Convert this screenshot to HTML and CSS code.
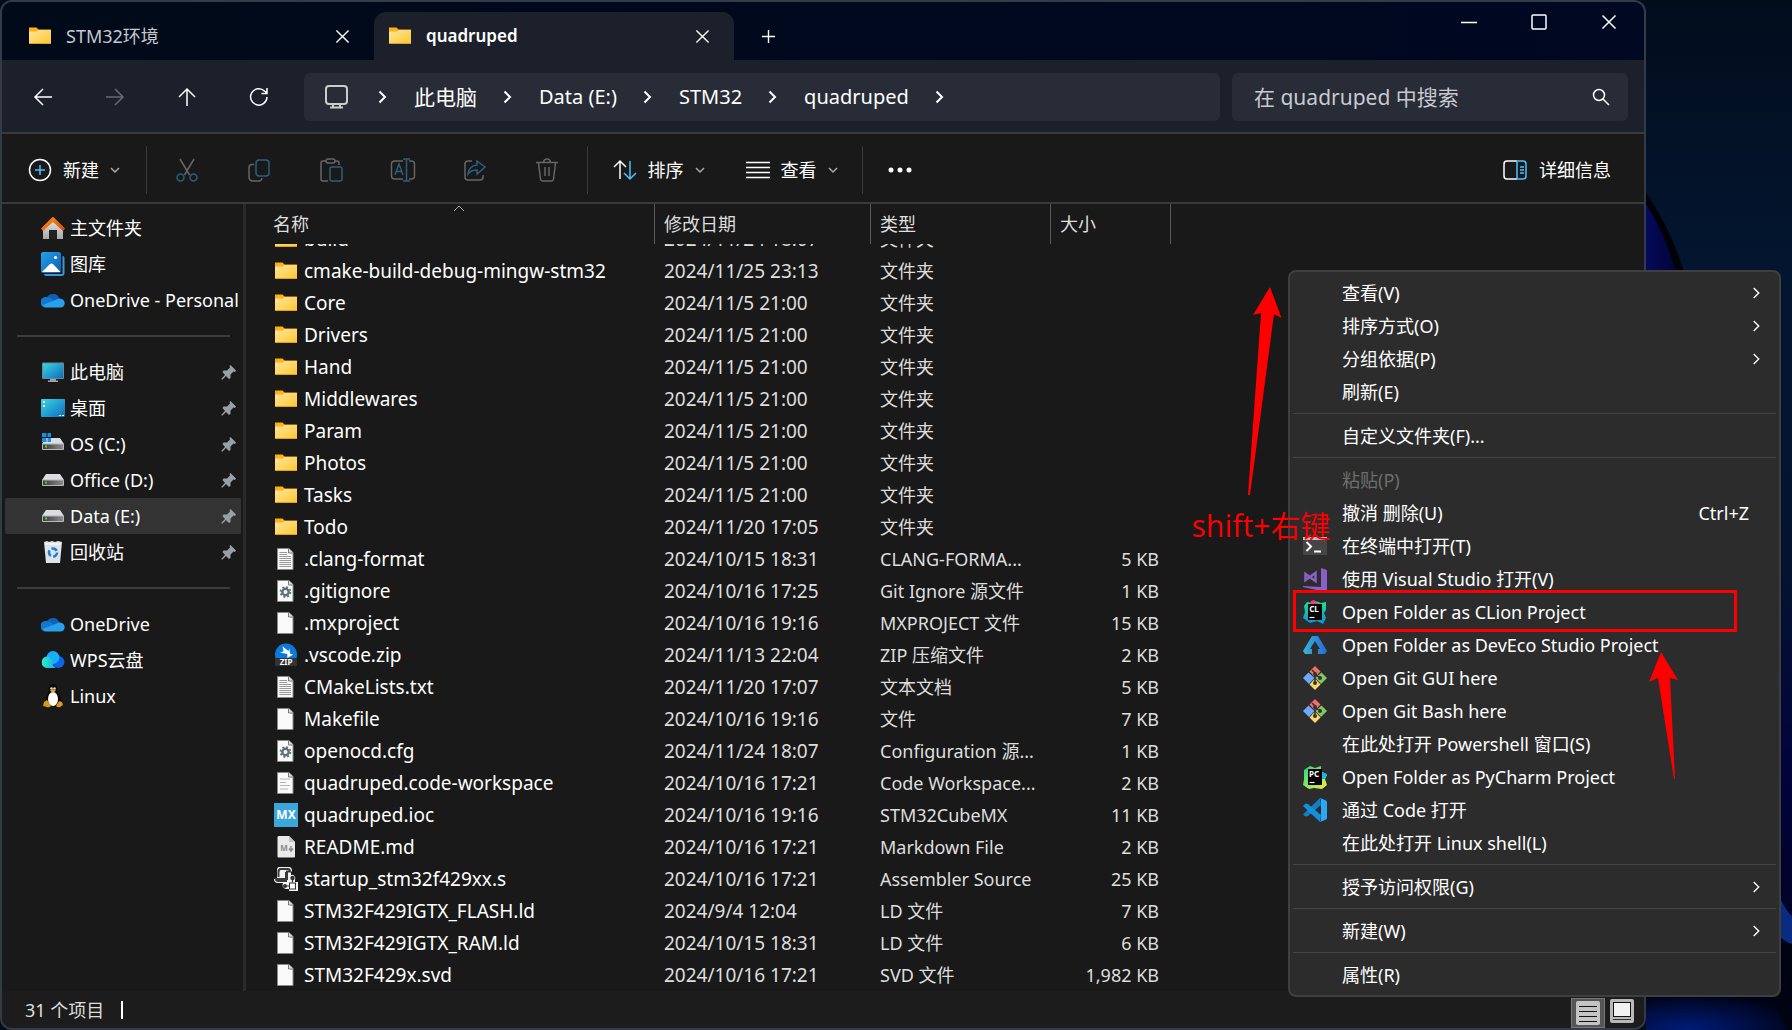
FILE: index.html
```html
<!DOCTYPE html>
<html lang="zh-CN">
<head>
  <meta charset="UTF-8" />
  <meta name="viewport" content="width=device-width, initial-scale=1.0"/>
  <title>quadruped</title>
  <link rel="stylesheet" href="styles.css">
</head>
<body>

<!-- icon sprite -->
<svg class="sprite" aria-hidden="true">
  <defs>
    <linearGradient id="gFolder" x1="0" y1="0" x2="1" y2="1"><stop offset="0" stop-color="#ffe69e"/><stop offset="1" stop-color="#ffc62e"/></linearGradient>
    <linearGradient id="gScreen" x1="0" y1="0" x2="1" y2="1"><stop offset="0" stop-color="#38d6e6"/><stop offset="1" stop-color="#0f6cbd"/></linearGradient>
    <linearGradient id="gHouse" x1="0" y1="0" x2="0" y2="1"><stop offset="0" stop-color="#e8e8e8"/><stop offset="1" stop-color="#a8a8a8"/></linearGradient>
    <linearGradient id="gRoof" x1="0" y1="0" x2="1" y2="1"><stop offset="0" stop-color="#ff9a1a"/><stop offset="1" stop-color="#d8420a"/></linearGradient>
    <linearGradient id="gPhoto" x1="0" y1="0" x2="1" y2="1"><stop offset="0" stop-color="#22a2ea"/><stop offset="1" stop-color="#0a5cb4"/></linearGradient>
    <linearGradient id="gWps" x1="0" y1="0" x2="1" y2="0"><stop offset="0" stop-color="#2df0c0"/><stop offset="1" stop-color="#18a8f5"/></linearGradient>
    <linearGradient id="gDrive" x1="0" y1="0" x2="1" y2="0"><stop offset="0" stop-color="#3c3c3c"/><stop offset="1" stop-color="#8a8a8a"/></linearGradient>
    <linearGradient id="gClion" x1="0" y1="0" x2="0" y2="1"><stop offset="0" stop-color="#21e38a"/><stop offset="1" stop-color="#0a8fe0"/></linearGradient>
    <linearGradient id="gPy" x1="0" y1="0" x2="1" y2="1"><stop offset="0" stop-color="#21d789"/><stop offset="1" stop-color="#f5ee3a"/></linearGradient>
    <linearGradient id="gEco" x1="0" y1="0" x2="1" y2="0"><stop offset="0" stop-color="#35b7d6"/><stop offset="1" stop-color="#2a67d8"/></linearGradient>
  </defs>

  <symbol id="folder" viewBox="0 0 24 24">
    <path d="M1 3.500h7.500l2 2H23v6H1z" fill="#fbb117"/>
    <path d="M1 7.500h8l1.500-1.500H23V20H1z" fill="url(#gFolder)"/>
    <path d="M1 19.500h22" stroke="#e0a020"/>
  </symbol>
  <symbol id="file" viewBox="0 0 24 24">
    <path d="M3.500 1.500h11.500l4 4v17H3.500z" fill="#fafafa" stroke="#8a8a8a"/>
    <path d="M14.500 1.500v4.500H19" fill="#dcdcdc" stroke="#7a7a7a"/>
  </symbol>
  <symbol id="text" viewBox="0 0 24 24">
    <use href="#file"/>
    <path d="M5.500 5.500H13M5.500 7.500H13M5.500 9.500h11.500M5.500 11.500h11.500M5.500 13.500h11.500M5.500 15.500h11.500M5.500 17.500h11.500M5.500 19.500h11.500" stroke="#9a9a9a"/>
  </symbol>
  <symbol id="code" viewBox="0 0 24 24">
    <use href="#file"/>
    <path d="M6 8h10M6 11.500h6M6 14.500h10M6 18h8" stroke="#b4b4b4"/>
  </symbol>
  <symbol id="config" viewBox="0 0 24 24">
    <use href="#file"/>
    <circle cx="11.500" cy="13" r="3.200" fill="none" stroke="#5e7078" stroke-width="2.400"/>
    <circle cx="11.500" cy="13" r="5" fill="none" stroke="#5e7078" stroke-width="1.600" stroke-dasharray="2 1.927"/>
  </symbol>
  <symbol id="zip" viewBox="0 0 24 24">
    <circle cx="12" cy="11.500" r="11" fill="#0a7bdc"/>
    <path d="M8.500 3.500l6 4.500.8-2.500 1 5.500 3 .5-6 3.500v-4L6 9.500l3.500-1z" fill="#fff"/>
    <rect x="1" y="15" width="22" height="8" rx="1" fill="#333"/>
  </symbol>
  <symbol id="markdown" viewBox="0 0 24 24">
    <path d="M5 1h10l6 6v14.500q0 1-1 1H4.500q-1 0-1-1V2q0-1 1.500-1z" fill="#eaeaea"/>
    <path d="M15 1v6h6z" fill="#c4c4c4"/>
    <path d="M17 11v4.500M15 13.500l2 2.500 2-2.500" fill="none" stroke="#8a8a8a" stroke-width="1.500"/>
  </symbol>
  <symbol id="asm" viewBox="0 0 24 24">
    <path d="M5 0h10q3 0 3 4l-1 1v3a3.500 3.500 0 0 1 4 5v2h3v9h-9v-2h-3a4 4 0 0 1-3-6H4q-4 0-4-4l3-1V4q0-4 2-4z" fill="#f4f4f4"/>
    <path d="M4.500 10V5q0-3 2.500-3h7q2 0 2 2.500h-3V12H2q0 2 2.500 2H12V5" fill="none" stroke="#3a3a3a" stroke-width="2"/>
    <circle cx="18.500" cy="11" r="2.200" fill="#333"/><circle cx="11" cy="19" r="2" fill="#333"/>
    <path d="M11 19h5M18.500 11v4.500" stroke="#333" stroke-width="1.200"/>
    <rect x="15.500" y="16" width="6" height="6" fill="#fff" stroke="#333"/>
  </symbol>

  <symbol id="home" viewBox="0 0 24 24">
    <path d="M2 11L12 2l10 9v12h-6v-9H8v9H2z" fill="url(#gHouse)"/>
    <path d="M8 14h8v9H8z" fill="#222"/>
    <path d="M0 12.500L11 1.500q1-1 2 0l11 11-2 2.500L12 6 2 15z" fill="url(#gRoof)"/>
  </symbol>
  <symbol id="gallery" viewBox="0 0 24 24">
    <path d="M3 22h18.500V4q2 0 2 2v15q0 3-3 3H5q-2 0-2-2z" fill="#3f95d6"/>
    <rect width="20" height="21" rx="2" fill="url(#gPhoto)"/>
    <circle cx="14.500" cy="5.500" r="1.600" fill="#fff"/>
    <path d="M1 20l8-8q1.500-1.200 3 0l7.500 8z" fill="#fff"/>
  </symbol>
  <symbol id="onedrive" viewBox="0 0 24 24">
    <path d="M6 9a7 7 0 0 1 12.500 2L12 16z" fill="#0d62b5"/>
    <path d="M5.500 9q3 0 6 2.500l6 4L4 19.500a5.200 5.200 0 0 1 1.500-10.500z" fill="#1279d2"/>
    <path d="M18 10.500a4.800 4.800 0 0 1 5.500 6q-1 3-4 3H5.500q-2.500 0-4-2.500L12 13z" fill="#28a0ea"/>
  </symbol>
  <symbol id="wps" viewBox="0 0 24 24">
    <circle cx="17.500" cy="14" r="6" fill="#0c62e8"/>
    <circle cx="12" cy="9.500" r="6.500" fill="#19aef8"/>
    <path d="M6 8.500a6 5.800 0 0 0 0 11.500h9q-4-2-3.500-7Q9 8.500 6 8.500z" fill="url(#gWps)"/>
  </symbol>
  <symbol id="linux" viewBox="0 0 24 24">
    <path d="M8 4q0-4 4-4t4 4q0 3 2.500 7t1.500 9H4q-1-4 1.500-8T8 4z" fill="#0a0a0a"/>
    <ellipse cx="12" cy="15" rx="5" ry="7" fill="#fff"/>
    <circle cx="10.500" cy="4.500" r="1.300" fill="#ddd"/><circle cx="13.500" cy="4.500" r="1.300" fill="#ddd"/>
    <path d="M9 6.500q3-2 6 0l-3 2.500z" fill="#f0b010"/>
    <path d="M3 18l3-2 4 6q-2 2-4 1l-4-1zM21 18l-3-1-3 5q2 2 4 1l3-2z" fill="#d89a12"/>
  </symbol>
  <symbol id="pc" viewBox="0 0 24 24">
    <rect x="1" y="2.500" width="22" height="16.500" rx="1" fill="#6e8790"/>
    <rect x="2" y="3.500" width="20" height="14.500" fill="url(#gScreen)"/>
    <path d="M9 19h6v1.500h2V22H7v-1.500h2z" fill="#9aa4aa"/>
  </symbol>
  <symbol id="desktop" viewBox="0 0 24 24">
    <rect y="3" width="24" height="18" rx="1" fill="url(#gScreen)"/>
    <path d="M2 5h2v2H2zM2 9h2v2H2zM18 19h2v1h-2zM21 19h2v1h-2z" fill="#fff"/>
  </symbol>
  <symbol id="drive" viewBox="0 0 24 24">
    <path d="M5 6h14l4 6H1z" fill="#dcdde0"/>
    <rect x="1" y="11.500" width="22" height="6.500" rx="1" fill="#b8b8b8"/>
    <rect x="2" y="12.500" width="20" height="4.500" fill="url(#gDrive)"/>
    <path d="M4 13.500h2v2H4z" fill="#2ee62e"/>
  </symbol>
  <symbol id="osdrive" viewBox="0 0 24 24">
    <use href="#drive"/>
    <path d="M1 1h4.500v4H1zM6.500 1H10v4H6.500zM1 6h4.500v4H1zM6.500 6H10v4H6.500z" fill="#1a8fe0"/>
  </symbol>
  <symbol id="bin" viewBox="0 0 24 24">
    <path d="M3 2l3-1 2 1 3-1 3 1 3-1 4 1-2 21H5z" fill="#dfe3e6"/>
    <path d="M4 4h16" stroke="#fff"/>
    <circle cx="12" cy="12.500" r="4" fill="none" stroke="#1a80d8" stroke-width="2.600" stroke-dasharray="6 2.400"/>
  </symbol>
  <symbol id="pin" viewBox="0 0 16 16">
    <path d="M9.500 1l5.500 5.500-1 1.500-1.500-.5-3 3 0 3.500-1.500 1-3-3L1.500 15.500l-1 0 0-1L4 11 1.500 8l1-1.500h3.500l3-3-.5-1.500z" fill="#96a0a6"/>
  </symbol>

  <symbol id="terminal" viewBox="0 0 24 24">
    <rect y="3" width="24" height="18" fill="#454545"/>
    <rect y="3" width="24" height="3" fill="#bdbdbd"/>
    <path d="M3.500 8l4.500 4.500L3.500 17M11 17.500h7" fill="none" stroke="#fff" stroke-width="2"/>
  </symbol>
  <symbol id="vs" viewBox="0 0 24 24">
    <path d="M18 1l6 2v20l-6 1-18-4v-1l18 1z" fill="#8a5fc8"/>
    <path d="M2.500 7l10 7V6l-10 7z" fill="none" stroke="#8a5fc8" stroke-width="2.500"/>
  </symbol>
  <symbol id="clion" viewBox="0 0 24 24">
    <path d="M4 2l5 1 3-2 6 2 5-1v8l-2 3 2 5-3 6-6-3-7 2-7-5 2-6-1-6z" fill="url(#gClion)"/>
    <path d="M8 1l3-1 4 4H7z" fill="#f03a8c"/>
    <rect x="5" y="4" width="14" height="16" fill="#000"/>
    <path d="M6.500 17.500h5" stroke="#fff" stroke-width="1.200"/>
  </symbol>
  <symbol id="pycharm" viewBox="0 0 24 24">
    <path d="M1 5l6-4 5 2 6-2v5l6 4-2 4 2 6-5 4-8-1-5 1-6-4 1-6z" fill="url(#gPy)"/>
    <path d="M19 7l5 2-2 5h-3z" fill="#15b8f0"/>
    <rect x="5" y="4" width="14" height="16" fill="#000"/>
    <path d="M6.500 17.500h5" stroke="#fff" stroke-width="1.200"/>
  </symbol>
  <symbol id="deveco" viewBox="0 0 24 24">
    <path d="M9 3h6l9 15-2 3h-7v-5h2l-5-8-5 8h2v5H2l-2-3z" fill="url(#gEco)"/>
  </symbol>
  <symbol id="git" viewBox="0 0 24 24">
    <path d="M12 0l5.500 5.500-5.500 6-5.500-6z" fill="#f07068"/>
    <path d="M5.500 6.500l6 5.500-5.500 6-6-6z" fill="#6ea8f8"/>
    <path d="M18.500 6.500L24 12l-6 6-5.500-6z" fill="#80c860"/>
    <path d="M12 12.500l5.500 6L12 24l-5.500-5.500z" fill="#f8d868"/>
    <path d="M9 4l3 3v11M12 8l5 4" stroke="#333" stroke-width="1.600" fill="none"/>
    <circle cx="12" cy="8" r="2" fill="#333"/><circle cx="17" cy="12" r="2" fill="#333"/><circle cx="12" cy="17" r="2" fill="#333"/>
  </symbol>
  <symbol id="vscode" viewBox="0 0 24 24">
    <path d="M17 0L2 14.500l-2 2 2.500 2L5 18 18 7z" fill="#0f7fc8"/>
    <path d="M17 24L0 8l2.500-2.500L5 6l13 11z" fill="#1490dc"/>
    <path d="M17 0l6 2.500q1 .5 1 1.500v16q0 1-1 1.500L17 24l1-2V2z" fill="#2aa8f2"/>
  </symbol>

  <symbol id="close" viewBox="0 0 16 16"><path d="M1.500 1.500l13 13M14.500 1.500l-13 13"/></symbol>
  <symbol id="plus" viewBox="0 0 16 16"><path d="M8 1v14M1 8h14"/></symbol>
  <symbol id="right" viewBox="0 0 24 24"><path d="M9.500 6.500l5.500 5.500-5.500 5.500"/></symbol>
  <symbol id="down" viewBox="0 0 10 10"><path d="M1 3l4 4 4-4"/></symbol>
</svg>

<!-- wallpaper -->
<svg class="wallpaper" viewBox="0 0 146 1030" preserveAspectRatio="none" aria-hidden="true">
  <defs>
    <linearGradient id="gSky" x1="0" y1="0" x2="0" y2="1"><stop offset="0" stop-color="#020d1c"/><stop offset=".25" stop-color="#03152f"/><stop offset=".55" stop-color="#04142f"/><stop offset=".75" stop-color="#01033a"/><stop offset="1" stop-color="#000416"/></linearGradient>
    <linearGradient id="gPetal" x1="0" y1="0" x2="1" y2="0"><stop offset="0" stop-color="#040a5a"/><stop offset="1" stop-color="#01022e"/></linearGradient>
    <radialGradient id="gGlow" cx=".3" cy="1" r=".8"><stop offset="0" stop-color="#001c7a"/><stop offset="1" stop-color="#000318"/></radialGradient>
  </defs>
  <rect width="146" height="1030" fill="url(#gSky)"/>
  <path d="M0 193q26 36 42 92H0z" fill="#000208"/>
  <path d="M0 204q20 30 36 86H0z" fill="url(#gPetal)"/>
  <path d="M135 900q6 12 11 16v28q-6-2-11-6z" fill="#0a2c80"/>
  <rect y="944" width="146" height="86" fill="#000312"/>
  <path d="M0 985h110q24 22 30 45H0z" fill="url(#gGlow)"/>
</svg>

<main class="window">
  <header class="titlebar">
    <div class="tab first">
      <svg class="icon"><use href="#folder"/></svg>
      <span>STM32环境</span>
      <button class="tab-close" aria-label="关闭"><svg class="line small"><use href="#close"/></svg></button>
    </div>
    <div class="tab active">
      <svg class="icon"><use href="#folder"/></svg>
      <span>quadruped</span>
      <button class="tab-close" aria-label="关闭"><svg class="line small"><use href="#close"/></svg></button>
    </div>
    <button class="new-tab" aria-label="新标签页"><svg class="line small"><use href="#plus"/></svg></button>
    <div class="controls">
      <button aria-label="最小化"><svg class="line" width="16" height="16"><path d="M0 8.500h16"/></svg></button>
      <button aria-label="最大化"><svg class="line" width="16" height="16"><rect x="1" y="1" width="14" height="14" rx="1"/></svg></button>
      <button aria-label="关闭"><svg class="line" width="16" height="16"><use href="#close"/></svg></button>
    </div>
  </header>

  <nav class="navbar">
    <button aria-label="后退"><svg class="line" width="20" height="20"><path d="M19 10H2M10 2l-8 8 8 8"/></svg></button>
    <button class="off" aria-label="前进"><svg class="line" width="20" height="20"><path d="M1 10h17M10 2l8 8-8 8"/></svg></button>
    <button aria-label="向上"><svg class="line" width="20" height="20"><path d="M10 19V2M2 10l8-8 8 8"/></svg></button>
    <button aria-label="刷新"><svg class="line" width="20" height="20"><path d="M18 10a8.200 8.200 0 1 1-2.500-6L18 6M18 1v5.500h-5.500"/></svg></button>
    <div class="address">
      <svg class="line device" width="28" height="24"><rect x="2" y="1" width="21" height="18" rx="3"/><path d="M9 19v3M16 19v3M6 22.500h13"/></svg>
      <svg class="line chevron"><use href="#right"/></svg>
      <a href="#" class="root">此电脑</a>
      <svg class="line chevron"><use href="#right"/></svg>
      <a href="#">Data (E:)</a>
      <svg class="line chevron"><use href="#right"/></svg>
      <a href="#">STM32</a>
      <svg class="line chevron"><use href="#right"/></svg>
      <a href="#">quadruped</a>
      <svg class="line chevron"><use href="#right"/></svg>
    </div>
    <div class="search">
      <input type="text" aria-label="搜索" placeholder="在 quadruped 中搜索">
      <svg class="line" width="18" height="18"><circle cx="7" cy="7" r="5.500"/><path d="M11 11l6 6"/></svg>
    </div>
  </nav>

  <div class="toolbar">
    <button class="new"><svg class="line" width="24" height="24"><circle cx="12" cy="12" r="10.500"/><path class="blue" d="M12 7v10M7 12h10"/></svg>新建<svg class="line caret"><use href="#down"/></svg></button>
    <span class="bar"></span>
    <button class="tool" aria-label="剪切"><svg class="line" width="24" height="24"><path d="M5 1l9.500 16M19 1L9.500 17"/><circle class="blue" cx="5.500" cy="19.500" r="3.500"/><circle class="blue" cx="18.500" cy="19.500" r="3.500"/></svg></button>
    <button class="tool" aria-label="复制"><svg class="line" width="24" height="24"><path d="M7 6.500H5q-3 0-3 3V19q0 4 4 4h6q2.500 0 3-3"/><rect class="blue" x="9" y="2" width="13" height="16" rx="3"/></svg></button>
    <button class="tool" aria-label="粘贴"><svg class="line" width="24" height="24"><path d="M9 23H4q-2 0-2-2V5q0-2 2-2h3M16 3h2q2 0 2 2v2"/><rect x="7" y="1" width="9" height="4" rx="2"/><rect class="blue" x="11" y="9" width="12" height="14" rx="2"/></svg></button>
    <button class="tool" aria-label="重命名"><svg class="line" width="26" height="24"><path d="M13 3H5Q1.500 3 1.500 6v12q0 3 3.500 3h8M19 3h2q3.500 0 3.500 3v12q0 3-3.500 3h-2"/><path class="blue" d="M16.500 1v22M13 1h7M13 23h7M5 17l4-11 4 11M6.500 13.500h5"/></svg></button>
    <button class="tool" aria-label="共享"><svg class="line" width="24" height="24"><path d="M9 3H5Q2 3 2 6v13q0 3 3 3h12q3 0 3-3v-2"/><path class="blue" d="M14 3l8 6-8 7v-4q-6 0-9 4 1-8 9-9z"/></svg></button>
    <button class="tool" aria-label="删除"><svg class="line" width="24" height="24"><path d="M1 4.500h22M8.500 4q.5-3 3.500-3t3.500 3M3.500 5l2 16q.3 2 2 2h9q1.700 0 2-2l2-16M10 9v9M14 9v9"/></svg></button>
    <span class="bar"></span>
    <button class="menu-btn"><svg class="line" width="24" height="24"><path d="M7 21V3M1 9l6-6 6 6"/><path class="blue" d="M17 3v18M11 15l6 6 6-6"/></svg>排序<svg class="line caret"><use href="#down"/></svg></button>
    <button class="menu-btn"><svg class="line" width="24" height="24"><path d="M0 4.500h24M0 9.500h24M0 14.500h24M0 19.500h24"/></svg>查看<svg class="line caret"><use href="#down"/></svg></button>
    <span class="bar"></span>
    <button class="more" aria-label="更多"><svg width="24" height="6" fill="#fff"><circle cx="3" cy="3" r="2.500"/><circle cx="12" cy="3" r="2.500"/><circle cx="21" cy="3" r="2.500"/></svg></button>
    <button class="details"><svg class="line" width="24" height="20"><path d="M14 1H4Q1 1 1 4v12q0 3 3 3h10"/><path class="blue" d="M14 1h6q3 0 3 3v12q0 3-3 3h-6zM17 7h4M17 10h4M17 13h4"/></svg>详细信息</button>
  </div>

  <div class="content">
    <aside class="sidebar">
      <a href="#"><svg class="icon"><use href="#home"/></svg>主文件夹</a>
      <a href="#"><svg class="icon"><use href="#gallery"/></svg>图库</a>
      <a href="#"><svg class="icon"><use href="#onedrive"/></svg>OneDrive - Personal</a>
      <hr>
      <a href="#"><svg class="icon"><use href="#pc"/></svg>此电脑<svg class="pin"><use href="#pin"/></svg></a>
      <a href="#"><svg class="icon"><use href="#desktop"/></svg>桌面<svg class="pin"><use href="#pin"/></svg></a>
      <a href="#"><svg class="icon"><use href="#osdrive"/></svg>OS (C:)<svg class="pin"><use href="#pin"/></svg></a>
      <a href="#"><svg class="icon"><use href="#drive"/></svg>Office (D:)<svg class="pin"><use href="#pin"/></svg></a>
      <a href="#" class="selected"><svg class="icon"><use href="#drive"/></svg>Data (E:)<svg class="pin"><use href="#pin"/></svg></a>
      <a href="#"><svg class="icon"><use href="#bin"/></svg>回收站<svg class="pin"><use href="#pin"/></svg></a>
      <hr>
      <a href="#"><svg class="icon"><use href="#onedrive"/></svg>OneDrive</a>
      <a href="#"><svg class="icon"><use href="#wps"/></svg>WPS云盘</a>
      <a href="#"><svg class="icon"><use href="#linux"/></svg>Linux</a>
    </aside>

    <section class="files" id="files">
      <table>
        <thead>
          <tr><th class="name">名称<svg class="line sort"><path d="M1 6l5-5 5 5"/></svg></th><th class="date">修改日期</th><th class="type">类型</th><th class="size">大小</th></tr>
        </thead>
        <tbody>
          <tr><td><svg class="icon"><use href="#folder"/></svg>build</td><td>2024/11/24 18:07</td><td>文件夹</td><td></td></tr>
          <tr><td><svg class="icon"><use href="#folder"/></svg>cmake-build-debug-mingw-stm32</td><td>2024/11/25 23:13</td><td>文件夹</td><td></td></tr>
          <tr><td><svg class="icon"><use href="#folder"/></svg>Core</td><td>2024/11/5 21:00</td><td>文件夹</td><td></td></tr>
          <tr><td><svg class="icon"><use href="#folder"/></svg>Drivers</td><td>2024/11/5 21:00</td><td>文件夹</td><td></td></tr>
          <tr><td><svg class="icon"><use href="#folder"/></svg>Hand</td><td>2024/11/5 21:00</td><td>文件夹</td><td></td></tr>
          <tr><td><svg class="icon"><use href="#folder"/></svg>Middlewares</td><td>2024/11/5 21:00</td><td>文件夹</td><td></td></tr>
          <tr><td><svg class="icon"><use href="#folder"/></svg>Param</td><td>2024/11/5 21:00</td><td>文件夹</td><td></td></tr>
          <tr><td><svg class="icon"><use href="#folder"/></svg>Photos</td><td>2024/11/5 21:00</td><td>文件夹</td><td></td></tr>
          <tr><td><svg class="icon"><use href="#folder"/></svg>Tasks</td><td>2024/11/5 21:00</td><td>文件夹</td><td></td></tr>
          <tr><td><svg class="icon"><use href="#folder"/></svg>Todo</td><td>2024/11/20 17:05</td><td>文件夹</td><td></td></tr>
          <tr><td><svg class="icon"><use href="#text"/></svg>.clang-format</td><td>2024/10/15 18:31</td><td>CLANG-FORMA...</td><td>5 KB</td></tr>
          <tr><td><svg class="icon"><use href="#config"/></svg>.gitignore</td><td>2024/10/16 17:25</td><td>Git Ignore 源文件</td><td>1 KB</td></tr>
          <tr><td><svg class="icon"><use href="#file"/></svg>.mxproject</td><td>2024/10/16 19:16</td><td>MXPROJECT 文件</td><td>15 KB</td></tr>
          <tr><td><svg class="icon" viewBox="0 0 24 24"><use href="#zip"/><text x="12" y="22" class="glyph">ZIP</text></svg>.vscode.zip</td><td>2024/11/13 22:04</td><td>ZIP 压缩文件</td><td>2 KB</td></tr>
          <tr><td><svg class="icon"><use href="#text"/></svg>CMakeLists.txt</td><td>2024/11/20 17:07</td><td>文本文档</td><td>5 KB</td></tr>
          <tr><td><svg class="icon"><use href="#file"/></svg>Makefile</td><td>2024/10/16 19:16</td><td>文件</td><td>7 KB</td></tr>
          <tr><td><svg class="icon"><use href="#config"/></svg>openocd.cfg</td><td>2024/11/24 18:07</td><td>Configuration 源...</td><td>1 KB</td></tr>
          <tr><td><svg class="icon"><use href="#code"/></svg>quadruped.code-workspace</td><td>2024/10/16 17:21</td><td>Code Workspace...</td><td>2 KB</td></tr>
          <tr><td><svg class="icon" viewBox="0 0 24 24"><rect width="24" height="24" fill="#3aa6dc"/><text x="12" y="16" class="glyph large">MX</text></svg>quadruped.ioc</td><td>2024/10/16 19:16</td><td>STM32CubeMX</td><td>11 KB</td></tr>
          <tr><td><svg class="icon" viewBox="0 0 24 24"><use href="#markdown"/><text x="10" y="16" class="glyph grey">M</text></svg>README.md</td><td>2024/10/16 17:21</td><td>Markdown File</td><td>2 KB</td></tr>
          <tr><td><svg class="icon"><use href="#asm"/></svg>startup_stm32f429xx.s</td><td>2024/10/16 17:21</td><td>Assembler Source</td><td>25 KB</td></tr>
          <tr><td><svg class="icon"><use href="#file"/></svg>STM32F429IGTX_FLASH.ld</td><td>2024/9/4 12:04</td><td>LD 文件</td><td>7 KB</td></tr>
          <tr><td><svg class="icon"><use href="#file"/></svg>STM32F429IGTX_RAM.ld</td><td>2024/10/15 18:31</td><td>LD 文件</td><td>6 KB</td></tr>
          <tr><td><svg class="icon"><use href="#file"/></svg>STM32F429x.svd</td><td>2024/10/16 17:21</td><td>SVD 文件</td><td>1,982 KB</td></tr>
        </tbody>
      </table>
    </section>
  </div>

  <footer class="status">
    <span class="count">31 个项目</span>
    <button class="view on" aria-label="详细信息视图"><svg width="24" height="24"><rect width="24" height="24" rx="2" fill="#c4c4c4"/><path d="M3 5.500h18M3 10.500h18M3 15.500h18M3 20.500h18" stroke="#111"/></svg></button>
    <button class="view" aria-label="大图标视图"><svg width="24" height="24"><rect width="24" height="24" rx="2" fill="#b8b8b8"/><rect x="3.500" y="3.500" width="17" height="14" fill="#f2f2f2" stroke="#111"/><path d="M3 20.500h18" stroke="#333"/></svg></button>
  </footer>
</main>

<div class="context-menu">
  <button>查看(V)<svg class="line chevron"><use href="#right"/></svg></button>
  <button>排序方式(O)<svg class="line chevron"><use href="#right"/></svg></button>
  <button>分组依据(P)<svg class="line chevron"><use href="#right"/></svg></button>
  <button>刷新(E)</button>
  <hr>
  <button>自定义文件夹(F)...</button>
  <hr>
  <button disabled>粘贴(P)</button>
  <button>撤消 删除(U)<kbd>Ctrl+Z</kbd></button>
  <button class="with-icon"><svg class="icon"><use href="#terminal"/></svg>在终端中打开(T)</button>
  <button class="with-icon"><svg class="icon"><use href="#vs"/></svg>使用 Visual Studio 打开(V)</button>
  <button class="with-icon marked"><svg class="icon" viewBox="0 0 24 24"><use href="#clion"/><text x="11" y="12" class="glyph">CL</text></svg>Open Folder as CLion Project</button>
  <button class="with-icon"><svg class="icon"><use href="#deveco"/></svg>Open Folder as DevEco Studio Project</button>
  <button class="with-icon"><svg class="icon"><use href="#git"/></svg>Open Git GUI here</button>
  <button class="with-icon"><svg class="icon"><use href="#git"/></svg>Open Git Bash here</button>
  <button>在此处打开 Powershell 窗口(S)</button>
  <button class="with-icon"><svg class="icon" viewBox="0 0 24 24"><use href="#pycharm"/><text x="11" y="12" class="glyph">PC</text></svg>Open Folder as PyCharm Project</button>
  <button class="with-icon"><svg class="icon"><use href="#vscode"/></svg>通过 Code 打开</button>
  <button>在此处打开 Linux shell(L)</button>
  <hr>
  <button>授予访问权限(G)<svg class="line chevron"><use href="#right"/></svg></button>
  <hr>
  <button>新建(W)<svg class="line chevron"><use href="#right"/></svg></button>
  <hr>
  <button>属性(R)</button>

  <!-- red notes on top of the menu -->
  <svg class="arrow arrow-up" viewBox="0 0 34 208"><path d="M22 0l11.500 31-7.500-4L2 208H0L13 26l-8 2z"/></svg>
  <svg class="arrow arrow-item" viewBox="0 0 30 128"><path d="M12 0l17 28-8-2 5 101h-1L9 26l-9 4z"/></svg>
  <span class="note">shift+右键</span>
</div>

<script>
// open the list scrolled to the last file
const files = document.getElementById('files');
files.scrollTop = files.scrollHeight;
</script>

</body>
</html>
```
FILE: styles.css
```css
* { box-sizing: border-box; }
body {
  font-family: "Noto Sans", "Noto Sans CJK SC", sans-serif;
  font-size: 18px;
  line-height: 24px;
  background-color: #020d1c;
  color: #fff;
  margin: 0;
  height: 100vh;
  overflow: hidden;
  position: relative;
}
button, input { font: inherit; color: inherit; background: none; border: none; padding: 0; margin: 0; }
button { display: flex; align-items: center; justify-content: center; white-space: nowrap; }
a { color: inherit; text-decoration: none; }
svg { display: block; flex: none; }
.sprite { position: absolute; width: 0; height: 0; }
.wallpaper { position: absolute; top: 0; right: 0; width: 146px; height: 100%; }
.icon { width: 24px; height: 24px; }
.line { fill: none; stroke: currentColor; stroke-width: 1.5; }
.small { width: 15px; height: 15px; }
.chevron { width: 24px; height: 24px; }
.caret { width: 10px; height: 10px; color: #aaa; }
.blue { stroke: #4cc2ff; }
.glyph { font-size: 8px; font-weight: bold; text-anchor: middle; fill: #fff; }
.glyph.large { font-size: 12px; }
.glyph.grey { fill: #8a8a8a; }

/* window */
.window { display: flex; flex-direction: column; height: 100vh; margin-right: 146px; border: 2px solid #333b48; border-radius: 12px; background: #191919; overflow: hidden; position: relative; }

.titlebar { display: flex; height: 58px; background: linear-gradient(to right, #000a18, #000822); flex: none; }
.tab { display: flex; align-items: center; gap: 14px; height: 48px; align-self: flex-end; width: 360px; padding: 0 16px 0 14px; color: #c5c8ce; }
.tab.first { width: 372px; padding-left: 26px; }
.tab.active { background: #1b202a; color: #fff; font-size: 17px; font-weight: 600; border-radius: 12px 12px 0 0; }
.tab-close { margin-left: auto; width: 32px; height: 32px; color: #fff; }
.new-tab { width: 36px; height: 48px; margin: 10px 0 0 16px; }
.controls { display: flex; margin-left: auto; }
.controls button { width: 70px; height: 40px; }

.navbar { display: flex; align-items: center; height: 72px; padding: 2px 16px 0 5px; background: #1b202b; font-size: 21px; flex: none; }
.navbar > button { width: 72px; height: 48px; }
.navbar .off { color: #666a72; }
.address { display: flex; align-items: center; flex: 1; height: 48px; margin: 0 12px 0 9px; padding-left: 20px; background: #272c37; border-radius: 6px; font-size: 20px; }
.address .root { font-size: 21px; }
.address .chevron { margin: 0 20px 0 18px; stroke-width: 2; }
.device { color: #ccc; stroke-width: 2; }
.search { display: flex; align-items: center; width: 396px; height: 48px; padding: 0 18px 0 22px; background: #272c37; border-radius: 6px; }
.search input { flex: 1; min-width: 0; outline: none; }
.search input::placeholder { color: #c8cad0; opacity: 1; }

.toolbar { display: flex; align-items: center; height: 72px; padding-top: 4px; border-top: 2px solid #3a3a3a; border-bottom: 2px solid #3a3a3a; flex: none; }
.toolbar .bar { width: 1px; height: 48px; margin: 0 4px; background: #3a3a3a; }
.new { gap: 11px; padding: 0 22px 0 26px; }
.tool { width: 72px; height: 48px; color: #666; }
.tool .blue { stroke: #2b5f7d; }
.menu-btn { gap: 11px; width: 133px; height: 48px; }
.more { width: 66px; height: 48px; }
.details { margin-left: auto; gap: 12px; padding-right: 33px; }

.content { display: flex; flex: 1; min-height: 0; }
.sidebar { width: 244px; padding: 6px 2px 0 3px; border-right: 3px solid #2a2a2a; flex: none; overflow: hidden; }
.sidebar a { display: flex; align-items: center; gap: 5px; height: 36px; padding: 0 4px 0 36px; white-space: nowrap; }
.sidebar .selected { background: #333; border-radius: 2px; }
.sidebar hr { height: 2px; margin: 17px 11px 17px 12px; border: none; background: #3c3c3c; }
.pin { width: 16px; height: 16px; margin-left: auto; }

.files { flex: 1; overflow-y: auto; scrollbar-width: none; }
table { table-layout: fixed; width: 925px; border-collapse: separate; border-spacing: 0; }
th { position: sticky; top: 0; height: 40px; padding: 0 0 0 9px; background: #191919; border-right: 1px solid #5a5a5a; color: #dedede; font-weight: normal; text-align: left; }
.name { width: 409px; }
.date { width: 216px; }
.type { width: 180px; }
.size { width: 120px; }
th.name { padding-left: 27px; }
.sort { position: absolute; top: 1px; left: 207px; width: 12px; height: 8px; color: #aaa; stroke-width: 1; }
td { height: 32px; padding: 0 0 0 9px; color: #dedede; white-space: nowrap; overflow: hidden; }
td:first-child { display: flex; align-items: center; gap: 6px; padding-left: 28px; color: #fff; font-size: 19px; }
td:nth-child(2) { font-size: 19px; }
td:last-child { padding: 0 12px 0 0; text-align: right; }

.status { display: flex; align-items: center; height: 37px; padding: 0 5px 0 23px; background: #1c1c1c; color: #dedede; flex: none; }
.count { padding-right: 17px; margin-right: auto; line-height: 18px; border-right: 2px solid #fff; }
.view { width: 34px; height: 30px; align-self: flex-end; padding-bottom: 4px; }
.view.on { padding: 0; background: #555; border: 1px solid #777; }

/* context menu */
.context-menu { position: absolute; top: 270px; right: 11px; width: 493px; padding: 4px 3px; background: #2c2c2c; border: 2px solid #3f3f3f; border-radius: 8px; }
.context-menu button { position: relative; justify-content: flex-start; width: 100%; height: 33px; padding: 0 9px 0 49px; }
.context-menu button:disabled { color: #6e6e6e; }
.context-menu .with-icon { gap: 15px; padding-left: 10px; }
.context-menu hr { height: 1px; margin: 5px 0; border: none; background: #444; }
.context-menu .chevron { margin-left: auto; width: 22px; height: 22px; }
kbd { margin-left: auto; padding-right: 18px; font: inherit; }
.marked::after { content: ""; position: absolute; inset: -5px 39px -4px 0; border: 3px solid #f00; }

.arrow { position: absolute; fill: #f00; }
.arrow-up { left: -42px; top: 15px; width: 34px; height: 208px; }
.arrow-item { left: 359px; top: 380px; width: 30px; height: 128px; }
.note { position: absolute; left: -98px; top: 236px; font-size: 30px; line-height: 36px; color: #f00; white-space: nowrap; }
```
